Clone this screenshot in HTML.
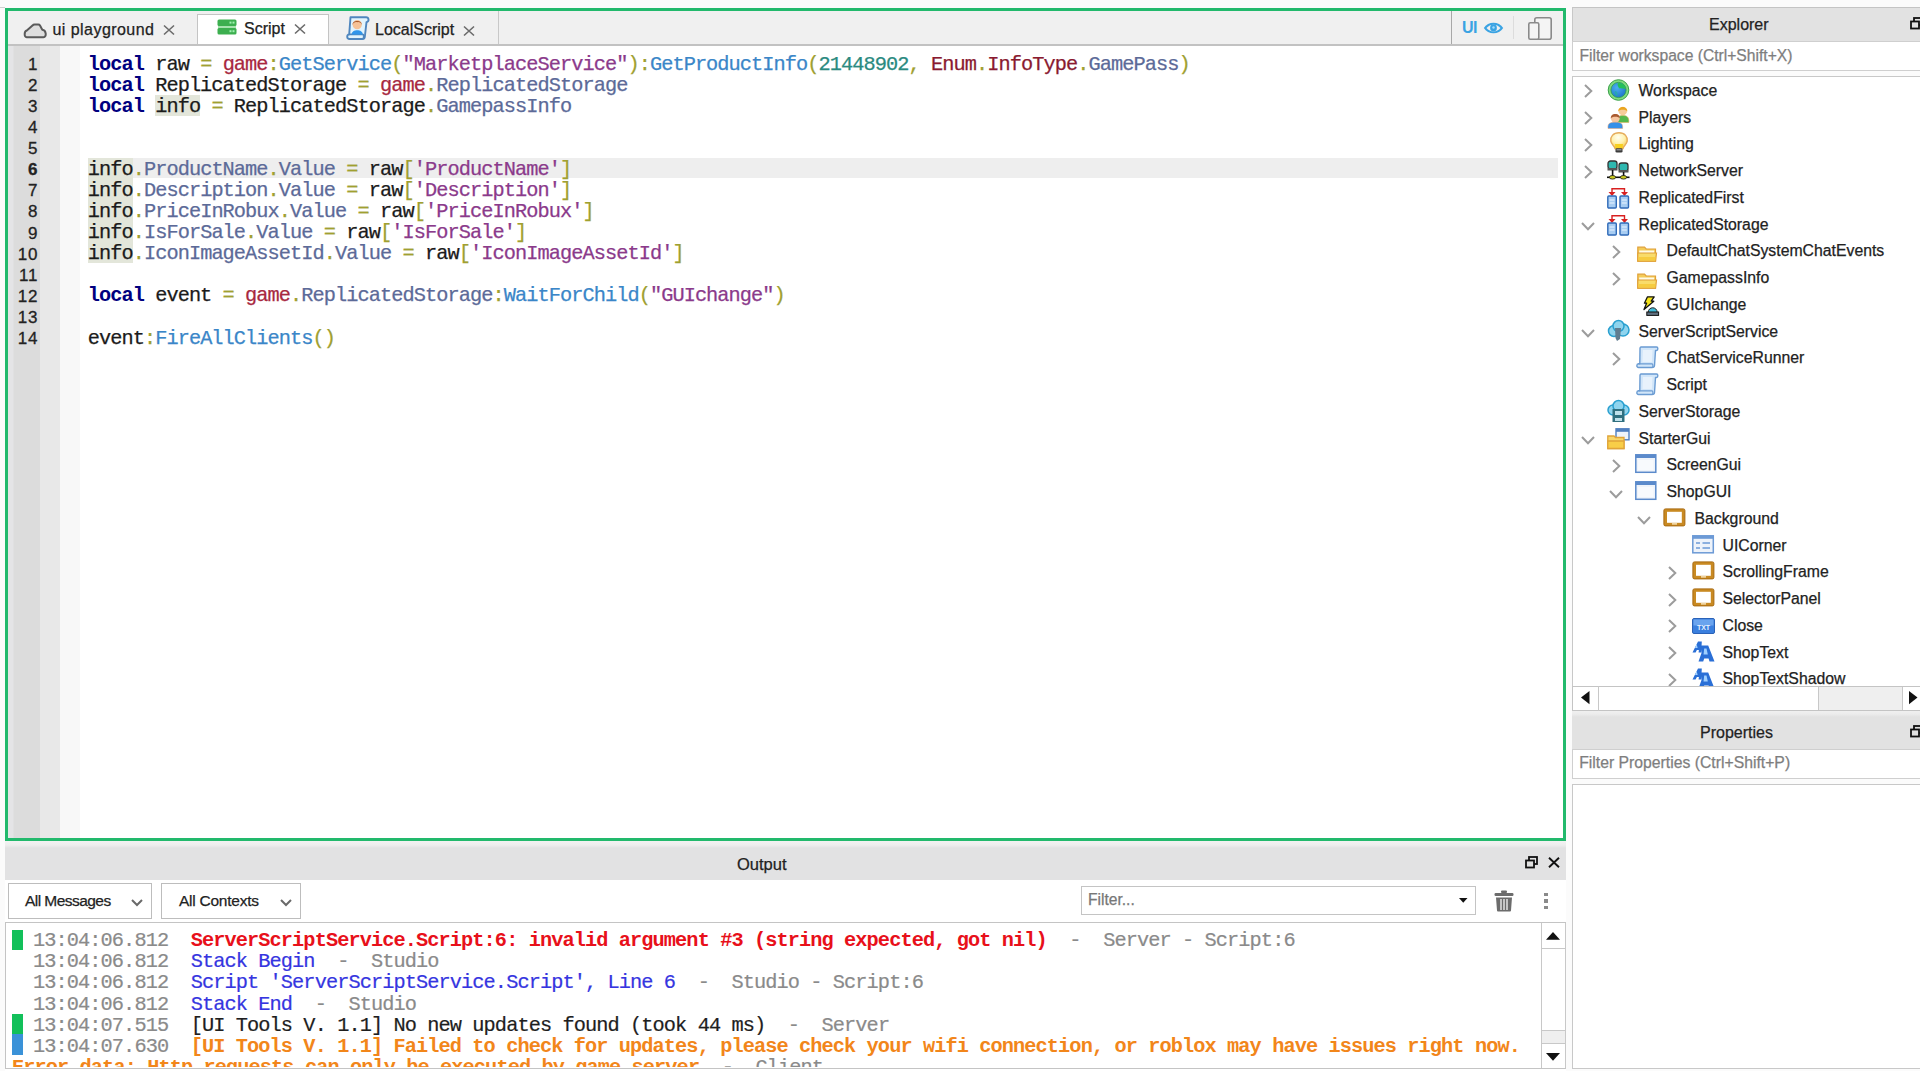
<!DOCTYPE html><html><head><meta charset="utf-8"><style>
*{box-sizing:border-box}
html,body{margin:0;padding:0;width:1920px;height:1071px;overflow:hidden;background:#fbfbfb;font-family:"Liberation Sans",sans-serif}
body{position:relative}
div,svg{position:absolute}
svg{overflow:visible}
.code{left:87.7px;font-family:"Liberation Mono",monospace;font-size:20.3px;letter-spacing:-0.928px;line-height:21px;height:21px;white-space:pre;color:#1b1b1b;-webkit-text-stroke:0.25px currentColor}
.ln{left:8px;width:30.3px;text-align:right;font-size:17px;letter-spacing:0.8px;line-height:21px;color:#222;-webkit-text-stroke:0.3px #222}
.k{color:#00007f;font-weight:bold;-webkit-text-stroke:0}
.o{color:#a0a030}
.g{color:#a8283f}
.f{color:#3a86c8}
.s{color:#8b3a8b}
.n{color:#2a8a7f}
.e{color:#8a1a30}
.p{color:#5c6a98}
.hl{background:#e3e6da}
.ti{font-size:15.8px;color:#222;white-space:nowrap;line-height:20px;-webkit-text-stroke:0.25px currentColor}
.out{left:33px;font-family:"Liberation Mono",monospace;font-size:20.3px;letter-spacing:-0.906px;line-height:21px;white-space:pre;color:#8a8a8a;-webkit-text-stroke:0.2px currentColor}
.tabt{font-size:16px;color:#222;white-space:nowrap;line-height:20px;-webkit-text-stroke:0.25px currentColor}
.x{stroke:#6b6b6b;stroke-width:1.6;fill:none}
.chev{stroke:#9c9c9c;stroke-width:2;fill:none}
</style></head><body>
<div style="left:5px;top:8px;width:1561px;height:833px;border:3px solid #22b96c;background:#fff"></div>
<div style="left:8px;top:11px;width:1555px;height:35px;background:#f0f0f0;border-bottom:2px solid #c2c2c2"></div>
<div style="left:197px;top:14px;width:132px;height:30px;background:#fff;border:1px solid #c4c4c4;border-bottom:none"></div>
<div style="left:498px;top:11px;width:1px;height:33px;background:#c8c8c8"></div>
<div style="left:1451px;top:11px;width:1px;height:33px;background:#a8a8a8"></div>
<div style="left:1513px;top:16px;width:1px;height:23px;background:#dcdcdc"></div>
<svg style="left:24px;top:23px" width="24" height="16" viewBox="0 0 24 16"><path d="M2.6 14.2 C0 14.2 0 8.2 2.8 7.6 L8.5 2.6 Q9.3 1.6 10.6 1.6 H14.3 Q15.4 1.6 16 2.6 L18.3 6.8 C22.3 7.2 23 14.2 19.5 14.2 Z" fill="#dedede" stroke="#5a5a5a" stroke-width="2" stroke-linejoin="round"/></svg>
<div class="tabt" style="left:52.5px;top:20px;letter-spacing:0.45px">ui playground</div>
<svg class="x" style="left:163px;top:25px" width="12" height="10"><path d="M1 0.5 L11 9.5 M11 0.5 L1 9.5"/></svg>
<svg style="left:217px;top:19px" width="20" height="16" viewBox="0 0 20 16">
<rect x="1" y="6" width="18" height="4" fill="#a6e3ae"/><rect x="0.5" y="0.5" width="19" height="6.5" rx="1.5" fill="#3caf4f"/>
<rect x="0.5" y="9" width="19" height="6.5" rx="1.5" fill="#3caf4f"/>
<rect x="12.5" y="2.6" width="2" height="2" fill="#9ff0b0"/><rect x="15.5" y="2.6" width="2" height="2" fill="#9ff0b0"/>
<rect x="12.5" y="11.2" width="2" height="2" fill="#9ff0b0"/><rect x="15.5" y="11.2" width="2" height="2" fill="#9ff0b0"/>
</svg>
<div class="tabt" style="left:244px;top:19px">Script</div>
<svg class="x" style="left:294px;top:24px" width="12" height="10"><path d="M1 0.5 L11 9.5 M11 0.5 L1 9.5"/></svg>
<svg style="left:346px;top:16px" width="24" height="24" viewBox="0 0 24 24">
<path d="M4.5 1.2 H20 C23 1.2 23.5 5.5 20.5 6.2 L18.8 21 C18.6 22.6 17.6 23 16.5 23 H3.5 C0.5 23 0.5 18.6 3.2 18.4 Z" fill="#e2f4fd" stroke="#4f86be" stroke-width="1.9" stroke-linejoin="round"/>
<path d="M3.2 18.4 H16.5 C18 18.4 18 21.5 17 23" fill="none" stroke="#4f86be" stroke-width="1.6"/>
<circle cx="11.2" cy="8.7" r="4.6" fill="#f6c296"/>
<path d="M6.5 9 C6 3.5 16.4 3.5 15.9 9 C15 6.2 13 5.8 11.2 6.2 C9.4 5.8 7.4 6.2 6.5 9Z" fill="#a8582c"/>
<path d="M5.8 18.4 C5.2 12.8 17.2 12.8 16.6 18.4 Z" fill="#2f95ea"/>
</svg>
<div class="tabt" style="left:375px;top:20px">LocalScript</div>
<svg class="x" style="left:463px;top:25.5px" width="12" height="10"><path d="M1 0.5 L11 9.5 M11 0.5 L1 9.5"/></svg>
<div style="left:1462px;top:17.5px;font-size:16px;font-weight:bold;color:#3aa3e3;line-height:20px;letter-spacing:-0.5px">UI</div>
<svg style="left:1483px;top:22px" width="21" height="12" viewBox="0 0 21 12">
<path d="M0.8 6 C5 -1 16 -1 20.2 6 C16 13 5 13 0.8 6 Z" fill="#3aa3e3"/>
<path d="M3.5 6 C7 1.5 14 1.5 17.5 6 C14 10.5 7 10.5 3.5 6 Z" fill="#f0f0f0"/>
<circle cx="10.5" cy="6" r="3.4" fill="#3aa3e3"/><circle cx="10.5" cy="5.5" r="1.2" fill="#9fdcff"/>
</svg>
<svg style="left:1528px;top:17px" width="24" height="23" viewBox="0 0 24 23">
<rect x="6.8" y="0.8" width="16.4" height="21.4" rx="2" fill="#f4f4f4" stroke="#8a8a8a" stroke-width="1.6"/>
<rect x="0.8" y="5.8" width="10" height="16.4" rx="1.5" fill="#f4f4f4" stroke="#8a8a8a" stroke-width="1.6"/>
</svg>
<div style="left:8px;top:46px;width:32px;height:792px;background:linear-gradient(90deg,#e4e4e6 0,#e4e4e6 5px,#dcdcdc 6px)"></div>
<div style="left:40px;top:46px;width:20px;height:792px;background:#e8e8e8"></div>
<div style="left:60px;top:46px;width:20px;height:792px;background:#f8f8f8"></div>
<div style="left:88px;top:157.50px;width:1469.5px;height:20.5px;background:#eeeeee"></div>
<div class="hl" style="left:155.2px;top:94.76px;width:45px;height:21px"></div>
<div class="hl" style="left:88px;top:158.00px;width:44.8px;height:105.40px"></div>
<div class="ln" style="top:53.90px">1</div>
<div class="ln" style="top:74.98px">2</div>
<div class="ln" style="top:96.06px">3</div>
<div class="ln" style="top:117.14px">4</div>
<div class="ln" style="top:138.22px">5</div>
<div class="ln" style="top:159.30px;font-weight:bold">6</div>
<div class="ln" style="top:180.38px">7</div>
<div class="ln" style="top:201.46px">8</div>
<div class="ln" style="top:222.54px">9</div>
<div class="ln" style="top:243.62px">10</div>
<div class="ln" style="top:264.70px">11</div>
<div class="ln" style="top:285.78px">12</div>
<div class="ln" style="top:306.86px">13</div>
<div class="ln" style="top:327.94px">14</div>
<div class="code" style="top:53.60px"><span class="k">local</span> raw <span class="o">=</span> <span class="g">game</span><span class="o">:</span><span class="f">GetService</span><span class="o">(</span><span class="s">"MarketplaceService"</span><span class="o">):</span><span class="f">GetProductInfo</span><span class="o">(</span><span class="n">21448902</span><span class="o">,</span> <span class="e">Enum</span><span class="o">.</span><span class="e">InfoType</span><span class="o">.</span><span class="p">GamePass</span><span class="o">)</span></div>
<div class="code" style="top:74.68px"><span class="k">local</span> ReplicatedStorage <span class="o">=</span> <span class="g">game</span><span class="o">.</span><span class="p">ReplicatedStorage</span></div>
<div class="code" style="top:95.76px"><span class="k">local</span> info <span class="o">=</span> ReplicatedStorage<span class="o">.</span><span class="p">GamepassInfo</span></div>
<div class="code" style="top:159.00px">info<span class="o">.</span><span class="p">ProductName</span><span class="o">.</span><span class="p">Value</span> <span class="o">=</span> raw<span class="o">[</span><span class="s">'ProductName'</span><span class="o">]</span></div>
<div class="code" style="top:180.08px">info<span class="o">.</span><span class="p">Description</span><span class="o">.</span><span class="p">Value</span> <span class="o">=</span> raw<span class="o">[</span><span class="s">'Description'</span><span class="o">]</span></div>
<div class="code" style="top:201.16px">info<span class="o">.</span><span class="p">PriceInRobux</span><span class="o">.</span><span class="p">Value</span> <span class="o">=</span> raw<span class="o">[</span><span class="s">'PriceInRobux'</span><span class="o">]</span></div>
<div class="code" style="top:222.24px">info<span class="o">.</span><span class="p">IsForSale</span><span class="o">.</span><span class="p">Value</span> <span class="o">=</span> raw<span class="o">[</span><span class="s">'IsForSale'</span><span class="o">]</span></div>
<div class="code" style="top:243.32px">info<span class="o">.</span><span class="p">IconImageAssetId</span><span class="o">.</span><span class="p">Value</span> <span class="o">=</span> raw<span class="o">[</span><span class="s">'IconImageAssetId'</span><span class="o">]</span></div>
<div class="code" style="top:285.48px"><span class="k">local</span> event <span class="o">=</span> <span class="g">game</span><span class="o">.</span><span class="p">ReplicatedStorage</span><span class="o">:</span><span class="f">WaitForChild</span><span class="o">(</span><span class="s">"GUIchange"</span><span class="o">)</span></div>
<div class="code" style="top:327.64px">event<span class="o">:</span><span class="f">FireAllClients</span><span class="o">()</span></div>
<div style="left:5px;top:841px;width:1561px;height:39px;background:linear-gradient(#f2f2f2,#eeeeee 4px,#e2e2e3 7px)"></div>
<div class="tabt" style="left:737px;top:853.5px;font-size:16.5px">Output</div>
<svg style="left:1525px;top:856px" width="13" height="13" viewBox="0 0 13 13">
<rect x="4" y="1" width="8" height="7" fill="none" stroke="#111" stroke-width="1.8"/>
<rect x="1" y="4.5" width="8" height="7" fill="#e1e1e1" stroke="#111" stroke-width="1.8"/>
</svg>
<svg style="left:1548px;top:857px" width="12" height="11"><path d="M1 0.8 L11 10.2 M11 0.8 L1 10.2" stroke="#111" stroke-width="1.9"/></svg>
<div style="left:5px;top:880px;width:1561px;height:191px;background:#fff"></div>
<div style="left:7.5px;top:883px;width:144.5px;height:36px;border:1px solid #bdbdbd;background:#fff"></div>
<div class="tabt" style="left:25px;top:891px;font-size:15.5px;letter-spacing:-0.55px">All Messages</div>
<svg class="x" style="left:130.5px;top:899px" width="12" height="8"><path d="M1 1 L6 6 L11 1" stroke="#6a6a6a" stroke-width="2"/></svg>
<div style="left:161px;top:883px;width:140px;height:36px;border:1px solid #bdbdbd;background:#fff"></div>
<div class="tabt" style="left:179px;top:891px;font-size:15.5px;letter-spacing:-0.25px">All Contexts</div>
<svg class="x" style="left:279.5px;top:899px" width="12" height="8"><path d="M1 1 L6 6 L11 1" stroke="#6a6a6a" stroke-width="2"/></svg>
<div style="left:1080.5px;top:885.5px;width:395px;height:29px;border:1px solid #c4c4c4;background:#fff"></div>
<div class="tabt" style="left:1088px;top:890px;font-size:15.6px;color:#777">Filter...</div>
<svg style="left:1458.5px;top:897.5px" width="9" height="5"><path d="M0 0 H8.5 L4.25 4.8Z" fill="#111"/></svg>
<svg style="left:1494px;top:890px" width="20" height="22" viewBox="0 0 20 22">
<rect x="7" y="0.5" width="6" height="2.5" rx="1" fill="#6c6c6c"/>
<rect x="0.5" y="3" width="19" height="3" rx="1.2" fill="#6c6c6c"/>
<path d="M2 7.5 H18 L17 20.5 Q17 21.5 16 21.5 H4 Q3 21.5 3 20.5 Z" fill="#6c6c6c"/>
<rect x="6.2" y="9" width="1.6" height="11" fill="#dcdcdc"/><rect x="9.2" y="9" width="1.6" height="11" fill="#dcdcdc"/><rect x="12.2" y="9" width="1.6" height="11" fill="#dcdcdc"/>
</svg>
<div style="left:1544px;top:892.5px;width:3.5px;height:3.5px;background:#8a8a8a"></div>
<div style="left:1544px;top:899px;width:3.5px;height:3.5px;background:#8a8a8a"></div>
<div style="left:1544px;top:905.5px;width:3.5px;height:3.5px;background:#8a8a8a"></div>
<div style="left:5px;top:922px;width:1561px;height:147px;border:1px solid #c4c4c4;border-right:none;background:#fff;overflow:hidden"></div>
<div style="left:1541px;top:923px;width:25px;height:145px;border-left:1px solid #c8c8c8;border-right:1px solid #c8c8c8;background:#fff"></div>
<div style="left:1541px;top:947.5px;width:25px;height:1px;background:#c8c8c8"></div>
<div style="left:1541px;top:1029.5px;width:25px;height:14.5px;background:#efefef;border:1px solid #c8c8c8"></div>
<svg style="left:1546px;top:931.5px" width="14" height="8"><path d="M0 7.8 H14 L7 0Z" fill="#111"/></svg>
<svg style="left:1546px;top:1052.5px" width="14" height="8"><path d="M0 0 H14 L7 7.8Z" fill="#111"/></svg>
<div style="left:11.5px;top:929.5px;width:11px;height:20px;background:#12c05a"></div>
<div style="left:11.5px;top:1013.8px;width:11px;height:20.6px;background:#12c05a"></div>
<div style="left:11.5px;top:1034.4px;width:11px;height:20.6px;background:#3a92d8"></div>
<div class="out" style="top:930.20px">13:04:06.812  <span style="color:#e8101a;font-weight:bold;-webkit-text-stroke:0">ServerScriptService.Script:6: invalid argument #3 (string expected, got nil)</span>  -  Server - Script:6</div>
<div class="out" style="top:951.30px">13:04:06.812  <span style="color:#3535e0">Stack Begin</span>  -  Studio</div>
<div class="out" style="top:972.40px">13:04:06.812  <span style="color:#3535e0">Script 'ServerScriptService.Script', Line 6</span>  -  Studio - Script:6</div>
<div class="out" style="top:993.50px">13:04:06.812  <span style="color:#3535e0">Stack End</span>  -  Studio</div>
<div class="out" style="top:1014.60px">13:04:07.515  <span style="color:#1e1e1e">[UI Tools V. 1.1] No new updates found (took 44 ms)</span>  -  Server</div>
<div class="out" style="top:1035.70px">13:04:07.630  <span style="color:#f2861a;font-weight:bold;-webkit-text-stroke:0">[UI Tools V. 1.1] Failed to check for updates, please check your wifi connection, or roblox may have issues right now.</span></div>
<div style="left:6px;top:1056px;width:1535px;height:10.5px;overflow:hidden"><div class="out" style="left:6px;top:0.80px"><span style="color:#f2861a;font-weight:bold;-webkit-text-stroke:0">Error data: Http requests can only be executed by game server</span>  -  Client</div></div>
<div style="left:1572px;top:7px;width:348px;height:35px;background:#e2e2e2;border-top:1.5px solid #c4c4c4;border-left:1px solid #c8c8c8"></div>
<div style="left:0px;top:7px;width:5px;height:1px;background:#cfcfcf"></div>
<div class="tabt" style="left:1709px;top:15px">Explorer</div>
<svg style="left:1910px;top:17px" width="13" height="13" viewBox="0 0 13 13">
<rect x="4" y="1" width="8" height="7" fill="none" stroke="#111" stroke-width="1.8"/>
<rect x="1" y="4.5" width="8" height="7" fill="#e1e1e1" stroke="#111" stroke-width="1.8"/>
</svg>
<div style="left:1572px;top:41px;width:348px;height:29.5px;background:#fff;border:1px solid #cfcfcf;border-right:none"></div>
<div class="tabt" style="left:1579.5px;top:45.5px;font-size:15.65px;color:#7e7e7e">Filter workspace (Ctrl+Shift+X)</div>
<div style="left:1572px;top:76px;width:348px;height:635px;background:#fff;border:1px solid #c8c8c8;border-right:none"></div>
<div style="left:1573px;top:77px;width:347px;height:609px;overflow:hidden">
<div class="ti" style="left:65.50px;top:3.90px">Workspace</div>
<svg class="chev" style="left:10.70px;top:7.30px" width="9" height="14"><path d="M1 1 L7.3 7 L1 13"/></svg>
<svg style="left:34.00px;top:2.00px" width="24" height="24" viewBox="0 0 24 24"><defs><radialGradient id="gg" cx="0.4" cy="0.35" r="0.7"><stop offset="0" stop-color="#4ab0f0"/><stop offset="1" stop-color="#1f74c8"/></radialGradient></defs>
<circle cx="11.5" cy="11" r="10.3" fill="#7fdc7f" stroke="#3aa04a" stroke-width="1"/>
<circle cx="11.5" cy="11" r="7.6" fill="url(#gg)" stroke="#2e9a4a" stroke-width="0.8"/>
<path d="M11 4 C15 3.5 18.5 6 18.5 9.5 C16.5 10.5 14.5 8.5 12.5 9.5 C11 8 10 5.5 11 4Z" fill="#22c05a"/>
<path d="M8 12 C10 12 11 14 10.5 17 C8.5 16.5 7 14 8 12Z" fill="#22b0a0" opacity="0.7"/></svg>
<div class="ti" style="left:65.50px;top:30.65px">Players</div>
<svg class="chev" style="left:10.70px;top:34.05px" width="9" height="14"><path d="M1 1 L7.3 7 L1 13"/></svg>
<svg style="left:34.00px;top:28.60px" width="24" height="24" viewBox="0 0 24 24"><circle cx="15.8" cy="5" r="4.3" fill="#f6cc9a"/><path d="M11.3 5.5 C10.8 -0.5 20.8 -0.5 20.3 5.5 C19.5 3.2 12 3.2 11.3 5.5Z" fill="#eaa620"/>
<path d="M10.2 16.5 C9.8 11 11.5 9.5 15.8 9.5 C20 9.5 22.2 11 21.8 16.5 Z" fill="#55b84c" stroke="#e8a850" stroke-width="0.5"/>
<circle cx="8.3" cy="12.3" r="4.4" fill="#f6c6a0"/><path d="M3.8 12.5 C3.3 6.6 13.3 6.6 12.8 12.5 C12 10.3 4.6 10.3 3.8 12.5Z" fill="#a85a30"/>
<path d="M1 22.5 C0.5 17.5 2.5 16.2 8.3 16.2 C14 16.2 16 17.5 15.6 22.5 Z" fill="#3590e8" stroke="#e8a070" stroke-width="0.5"/></svg>
<div class="ti" style="left:65.50px;top:57.40px">Lighting</div>
<svg class="chev" style="left:10.70px;top:60.80px" width="9" height="14"><path d="M1 1 L7.3 7 L1 13"/></svg>
<svg style="left:35.50px;top:55.30px" width="24" height="24" viewBox="0 0 24 24"><defs><radialGradient id="bg" cx="0.45" cy="0.3" r="0.7"><stop offset="0" stop-color="#fffef0"/><stop offset="0.55" stop-color="#fff2b0"/><stop offset="1" stop-color="#f5c848"/></radialGradient></defs>
<path d="M10 0.8 C4.2 0.8 1 4.8 1.8 9.2 C2.4 12.5 5.2 13.8 6 16.5 H14 C14.8 13.8 17.6 12.5 18.2 9.2 C19 4.8 15.8 0.8 10 0.8Z" fill="url(#bg)" stroke="#e6ac5c" stroke-width="1.4"/>
<path d="M6 12 H14 L13.6 16.5 H6.4Z" fill="#f8d020"/>
<rect x="6.5" y="16.3" width="7" height="4.2" rx="1.3" fill="#3c3c3c"/><rect x="7.5" y="17.2" width="5" height="1.2" fill="#a0a0a0"/></svg>
<div class="ti" style="left:65.50px;top:84.15px">NetworkServer</div>
<svg class="chev" style="left:10.70px;top:87.55px" width="9" height="14"><path d="M1 1 L7.3 7 L1 13"/></svg>
<svg style="left:34.00px;top:83.00px" width="24" height="24" viewBox="0 0 24 24"><rect x="1" y="1" width="9" height="8" rx="2.5" fill="#2fb8b0" stroke="#333" stroke-width="1.3"/>
<rect x="12" y="3" width="9" height="8" rx="2.5" fill="#2fb8b0" stroke="#333" stroke-width="1.3"/>
<rect x="0.5" y="8" width="10" height="2.5" fill="#555"/><rect x="11.5" y="10" width="10" height="2.5" fill="#555"/>
<rect x="4.8" y="10" width="1.6" height="7" fill="#111"/><rect x="15.8" y="12" width="1.6" height="5" fill="#111"/>
<rect x="0" y="16.5" width="22.5" height="1.6" fill="#111"/>
<ellipse cx="5.5" cy="17.3" rx="3.2" ry="1.8" fill="#c8c820" stroke="#111" stroke-width="0.8"/>
<ellipse cx="16.5" cy="17.3" rx="3.2" ry="1.8" fill="#c8c820" stroke="#111" stroke-width="0.8"/></svg>
<div class="ti" style="left:65.50px;top:110.90px">ReplicatedFirst</div>
<svg style="left:34.00px;top:110.00px" width="24" height="24" viewBox="0 0 24 24"><path d="M5 6 V1.8 H17.5 V6" fill="none" stroke="#d82020" stroke-width="1.4"/>
<path d="M1.5 5 H8.5 L5 9Z M14 5 H21 L17.5 9Z" fill="#d82020"/>
<rect x="0.8" y="9" width="8.5" height="12" rx="1" fill="#a8cdf2" stroke="#2f6ab8" stroke-width="1.4"/>
<rect x="13" y="9" width="8.5" height="12" rx="1" fill="#a8cdf2" stroke="#2f6ab8" stroke-width="1.4"/>
<path d="M2.5 13 H7.5 M2.5 16 H7.5 M14.8 13 H19.8 M14.8 16 H19.8" stroke="#eaf4ff" stroke-width="1"/></svg>
<div class="ti" style="left:65.50px;top:137.65px">ReplicatedStorage</div>
<svg class="chev" style="left:8.20px;top:145.05px" width="14" height="9"><path d="M1 1 L7 7.3 L13 1"/></svg>
<svg style="left:34.00px;top:136.70px" width="24" height="24" viewBox="0 0 24 24"><path d="M5 6 V1.8 H17.5 V6" fill="none" stroke="#d82020" stroke-width="1.4"/>
<path d="M1.5 5 H8.5 L5 9Z M14 5 H21 L17.5 9Z" fill="#d82020"/>
<rect x="0.8" y="9" width="8.5" height="12" rx="1" fill="#a8cdf2" stroke="#2f6ab8" stroke-width="1.4"/>
<rect x="13" y="9" width="8.5" height="12" rx="1" fill="#a8cdf2" stroke="#2f6ab8" stroke-width="1.4"/>
<path d="M2.5 13 H7.5 M2.5 16 H7.5 M14.8 13 H19.8 M14.8 16 H19.8" stroke="#eaf4ff" stroke-width="1"/></svg>
<div class="ti" style="left:93.50px;top:164.40px">DefaultChatSystemChatEvents</div>
<svg class="chev" style="left:38.70px;top:167.80px" width="9" height="14"><path d="M1 1 L7.3 7 L1 13"/></svg>
<svg style="left:63.50px;top:169.30px" width="24" height="24" viewBox="0 0 24 24"><path d="M0.8 1.2 H7.5 L9.2 3 H18.5 V15.2 H0.8 Z" fill="#f4cc58" stroke="#e0a038" stroke-width="1.2"/>
<path d="M2.2 4.5 H17.2 V8 H2.2Z" fill="#fffbe8"/>
<path d="M0.8 7 H19.5 L18.5 15.2 H0.8Z" fill="#f9dc6a" stroke="#e0a038" stroke-width="1.2"/>
<path d="M1.5 11 H18.5 V14.5 H1.5Z" fill="#f6cc40"/></svg>
<div class="ti" style="left:93.50px;top:191.15px">GamepassInfo</div>
<svg class="chev" style="left:38.70px;top:194.55px" width="9" height="14"><path d="M1 1 L7.3 7 L1 13"/></svg>
<svg style="left:63.50px;top:196.00px" width="24" height="24" viewBox="0 0 24 24"><path d="M0.8 1.2 H7.5 L9.2 3 H18.5 V15.2 H0.8 Z" fill="#f4cc58" stroke="#e0a038" stroke-width="1.2"/>
<path d="M2.2 4.5 H17.2 V8 H2.2Z" fill="#fffbe8"/>
<path d="M0.8 7 H19.5 L18.5 15.2 H0.8Z" fill="#f9dc6a" stroke="#e0a038" stroke-width="1.2"/>
<path d="M1.5 11 H18.5 V14.5 H1.5Z" fill="#f6cc40"/></svg>
<div class="ti" style="left:93.50px;top:217.90px">GUIchange</div>
<svg style="left:69.00px;top:218.60px" width="24" height="24" viewBox="0 0 24 24"><path d="M5.5 0.8 H12.2 L9.2 5.2 H11.8 L2 13.5 L4.6 7.2 H2.4 Z" fill="#f5e41a" stroke="#111" stroke-width="1.3" stroke-linejoin="round"/>
<path d="M6.2 16.5 C6.2 10.2 15.2 10.2 15.2 16.5Z" fill="#3fbad8" stroke="#222" stroke-width="1"/>
<rect x="4.8" y="16" width="11.8" height="3.4" fill="#5f6f7f" stroke="#111" stroke-width="1"/></svg>
<div class="ti" style="left:65.50px;top:244.65px">ServerScriptService</div>
<svg class="chev" style="left:8.20px;top:252.05px" width="14" height="9"><path d="M1 1 L7 7.3 L13 1"/></svg>
<svg style="left:34.00px;top:242.30px" width="24" height="24" viewBox="0 0 24 24"><circle cx="7" cy="12" r="5.5" fill="#8fd4ee" stroke="#2aa0d0" stroke-width="1.5"/>
<circle cx="16" cy="11" r="6" fill="#8fd4ee" stroke="#2aa0d0" stroke-width="1.5"/>
<circle cx="11.5" cy="7" r="5.5" fill="#8fd4ee" stroke="#2aa0d0" stroke-width="1.5"/>
<path d="M8 9 H14 L13 20 L10 22 L8.5 19Z" fill="#607c90"/></svg>
<div class="ti" style="left:93.50px;top:271.40px">ChatServiceRunner</div>
<svg class="chev" style="left:38.70px;top:274.80px" width="9" height="14"><path d="M1 1 L7.3 7 L1 13"/></svg>
<svg style="left:63.00px;top:269.00px" width="24" height="24" viewBox="0 0 24 24"><path d="M5 1 H20.5 C22.3 1 22.3 4.5 20.5 4.5 L19.5 4.5 L18.5 19.5 C18.4 21 17.5 21.5 16 21.5 H2.5 C0.3 21.5 0.3 17.8 2.5 17.8 H3.8 L4 2.5 C4 1.5 4.5 1 5 1 Z" fill="#d2e6f9" stroke="#6a9bd2" stroke-width="1.4" stroke-linejoin="round"/>
<path d="M2.5 17.8 H16 C17.2 17.8 17.2 21.5 16 21.5" fill="none" stroke="#6a9bd2" stroke-width="1.2"/>
<path d="M7 4 H16.5 L15.8 16 H6.5 Z" fill="#e8f2fc"/></svg>
<div class="ti" style="left:93.50px;top:298.15px">Script</div>
<svg style="left:63.00px;top:296.00px" width="24" height="24" viewBox="0 0 24 24"><path d="M5 1 H20.5 C22.3 1 22.3 4.5 20.5 4.5 L19.5 4.5 L18.5 19.5 C18.4 21 17.5 21.5 16 21.5 H2.5 C0.3 21.5 0.3 17.8 2.5 17.8 H3.8 L4 2.5 C4 1.5 4.5 1 5 1 Z" fill="#d2e6f9" stroke="#6a9bd2" stroke-width="1.4" stroke-linejoin="round"/>
<path d="M2.5 17.8 H16 C17.2 17.8 17.2 21.5 16 21.5" fill="none" stroke="#6a9bd2" stroke-width="1.2"/>
<path d="M7 4 H16.5 L15.8 16 H6.5 Z" fill="#e8f2fc"/></svg>
<div class="ti" style="left:65.50px;top:324.90px">ServerStorage</div>
<svg style="left:34.00px;top:323.00px" width="24" height="24" viewBox="0 0 24 24"><circle cx="6" cy="10" r="5" fill="#8fd4ee" stroke="#2aa0d0" stroke-width="1.5"/>
<circle cx="17" cy="10" r="5" fill="#8fd4ee" stroke="#2aa0d0" stroke-width="1.5"/>
<circle cx="11.5" cy="6" r="5.5" fill="#8fd4ee" stroke="#2aa0d0" stroke-width="1.5"/>
<rect x="5.5" y="9" width="12" height="13" fill="#2f6f7f"/>
<rect x="8" y="11" width="7" height="4" fill="#bfe0ea"/><rect x="8" y="18" width="7" height="3" fill="#bfe0ea"/></svg>
<div class="ti" style="left:65.50px;top:351.65px">StarterGui</div>
<svg class="chev" style="left:8.20px;top:359.05px" width="14" height="9"><path d="M1 1 L7 7.3 L13 1"/></svg>
<svg style="left:34.00px;top:351.20px" width="24" height="24" viewBox="0 0 24 24"><rect x="9" y="0.8" width="13" height="11" fill="#eef4fb" stroke="#4f7fc0" stroke-width="1.4"/>
<rect x="9" y="0.8" width="13" height="3" fill="#4f7fc0"/>
<path d="M0.8 8 H7 L8.5 9.5 H17 V20.5 H0.8Z" fill="#f7d76a" stroke="#e0a43a" stroke-width="1.3"/>
<path d="M0.8 13 H17 V20.5 H0.8Z" fill="#f8ce48" stroke="#e0a43a" stroke-width="1.3"/></svg>
<div class="ti" style="left:93.50px;top:378.40px">ScreenGui</div>
<svg class="chev" style="left:38.70px;top:381.80px" width="9" height="14"><path d="M1 1 L7.3 7 L1 13"/></svg>
<svg style="left:62.00px;top:377.30px" width="24" height="24" viewBox="0 0 24 24"><rect x="0.8" y="0.8" width="20" height="17.5" fill="#eef3fa" stroke="#5b8acb" stroke-width="1.5"/>
<rect x="0.8" y="0.8" width="20" height="3.2" fill="#5b8acb"/>
<rect x="3" y="6" width="15.5" height="10" fill="#f8fafd"/></svg>
<div class="ti" style="left:93.50px;top:405.15px">ShopGUI</div>
<svg class="chev" style="left:36.20px;top:412.55px" width="14" height="9"><path d="M1 1 L7 7.3 L13 1"/></svg>
<svg style="left:62.00px;top:404.30px" width="24" height="24" viewBox="0 0 24 24"><rect x="0.8" y="0.8" width="20" height="17.5" fill="#eef3fa" stroke="#5b8acb" stroke-width="1.5"/>
<rect x="0.8" y="0.8" width="20" height="3.2" fill="#5b8acb"/>
<rect x="3" y="6" width="15.5" height="10" fill="#f8fafd"/></svg>
<div class="ti" style="left:121.50px;top:431.90px">Background</div>
<svg class="chev" style="left:64.20px;top:439.30px" width="14" height="9"><path d="M1 1 L7 7.3 L13 1"/></svg>
<svg style="left:90.30px;top:431.00px" width="24" height="24" viewBox="0 0 24 24"><rect x="0.9" y="0.9" width="21" height="17" rx="1.5" fill="#c98a22" stroke="#a86a10" stroke-width="1"/>
<rect x="4" y="3.8" width="14.8" height="11" fill="#fff"/>
<rect x="9" y="15.3" width="5" height="1.2" fill="#fff4d8"/></svg>
<div class="ti" style="left:149.50px;top:458.65px">UICorner</div>
<svg style="left:118.70px;top:457.60px" width="24" height="24" viewBox="0 0 24 24"><rect x="0.8" y="0.8" width="20.5" height="17" fill="#eef3fa" stroke="#6c9ad6" stroke-width="1.5"/>
<rect x="0.8" y="0.8" width="20.5" height="3" fill="#6c9ad6"/>
<path d="M4 8 H8 M4 13 H8 M10.5 8 H18 M10.5 13 H18" stroke="#6c9ad6" stroke-width="1.6"/></svg>
<div class="ti" style="left:149.50px;top:485.40px">ScrollingFrame</div>
<svg class="chev" style="left:94.70px;top:488.80px" width="9" height="14"><path d="M1 1 L7.3 7 L1 13"/></svg>
<svg style="left:118.70px;top:484.20px" width="24" height="24" viewBox="0 0 24 24"><rect x="0.9" y="0.9" width="21" height="17" rx="1.5" fill="#c98a22" stroke="#a86a10" stroke-width="1"/>
<rect x="4" y="3.8" width="14.8" height="11" fill="#fff"/>
<rect x="9" y="15.3" width="5" height="1.2" fill="#fff4d8"/></svg>
<div class="ti" style="left:149.50px;top:512.15px">SelectorPanel</div>
<svg class="chev" style="left:94.70px;top:515.55px" width="9" height="14"><path d="M1 1 L7.3 7 L1 13"/></svg>
<svg style="left:118.70px;top:511.00px" width="24" height="24" viewBox="0 0 24 24"><rect x="0.9" y="0.9" width="21" height="17" rx="1.5" fill="#c98a22" stroke="#a86a10" stroke-width="1"/>
<rect x="4" y="3.8" width="14.8" height="11" fill="#fff"/>
<rect x="9" y="15.3" width="5" height="1.2" fill="#fff4d8"/></svg>
<div class="ti" style="left:149.50px;top:538.90px">Close</div>
<svg class="chev" style="left:94.70px;top:542.30px" width="9" height="14"><path d="M1 1 L7.3 7 L1 13"/></svg>
<svg style="left:118.70px;top:541.00px" width="24" height="24" viewBox="0 0 24 24"><rect x="0.5" y="0.5" width="22" height="15" rx="1.5" fill="#3a7fde" stroke="#2a62b8" stroke-width="1"/>
<rect x="1.5" y="1.5" width="20" height="6" fill="#6aa4ee"/>
<text x="11.5" y="11.5" font-family="Liberation Sans" font-size="7" font-weight="bold" fill="#e8f2ff" text-anchor="middle">TXT</text></svg>
<div class="ti" style="left:149.50px;top:565.65px">ShopText</div>
<svg class="chev" style="left:94.70px;top:569.05px" width="9" height="14"><path d="M1 1 L7.3 7 L1 13"/></svg>
<svg style="left:118.70px;top:564.00px" width="24" height="24" viewBox="0 0 24 24"><path d="M0.5 11.5 L6 0.5 H9.8 L9.2 11.5 H6.6 L6.9 9 H4.9 L3.6 11.5Z" fill="#2a6fd6"/>
<path d="M8.5 4.5 H16.2 L22.5 20.5 H17.5 L16.6 17.5 H12.2 L11.2 20.5 H6.5 L9.5 12 Z" fill="#2a6fd6"/>
<path d="M12.2 7.5 H14.5 L15.8 13.5 H11.5 Z" fill="#9fd0ff"/>
<path d="M4.6 3 L3 7 H5.6Z" fill="#9fd0ff"/></svg>
<div class="ti" style="left:149.50px;top:592.40px">ShopTextShadow</div>
<svg class="chev" style="left:94.70px;top:595.80px" width="9" height="14"><path d="M1 1 L7.3 7 L1 13"/></svg>
<svg style="left:118.70px;top:590.70px" width="24" height="24" viewBox="0 0 24 24"><path d="M0.5 11.5 L6 0.5 H9.8 L9.2 11.5 H6.6 L6.9 9 H4.9 L3.6 11.5Z" fill="#2a6fd6"/>
<path d="M8.5 4.5 H16.2 L22.5 20.5 H17.5 L16.6 17.5 H12.2 L11.2 20.5 H6.5 L9.5 12 Z" fill="#2a6fd6"/>
<path d="M12.2 7.5 H14.5 L15.8 13.5 H11.5 Z" fill="#9fd0ff"/>
<path d="M4.6 3 L3 7 H5.6Z" fill="#9fd0ff"/></svg>
</div>
<div style="left:1572px;top:686px;width:348px;height:24.5px;background:#fff;border:1px solid #c4c4c4;border-right:none"></div>
<div style="left:1597.5px;top:686px;width:1px;height:24.5px;background:#c8c8c8"></div>
<div style="left:1817.5px;top:687px;width:85px;height:22.5px;background:#efefef;border-left:1px solid #c8c8c8;border-right:1px solid #c8c8c8"></div>
<svg style="left:1581.3px;top:690.7px" width="9" height="13.5"><path d="M8.5 0 V13.2 L0 6.6Z" fill="#111"/></svg>
<svg style="left:1909.3px;top:690.7px" width="9" height="13.5"><path d="M0 0 V13.2 L8.5 6.6Z" fill="#111"/></svg>
<div style="left:1572px;top:710.5px;width:348px;height:38.5px;background:linear-gradient(#f0f0f0,#ececec 3px,#e2e2e2 6px)"></div>
<div class="tabt" style="left:1700px;top:723px">Properties</div>
<svg style="left:1910px;top:725px" width="13" height="13" viewBox="0 0 13 13">
<rect x="4" y="1" width="8" height="7" fill="none" stroke="#111" stroke-width="1.8"/>
<rect x="1" y="4.5" width="8" height="7" fill="#e1e1e1" stroke="#111" stroke-width="1.8"/>
</svg>
<div style="left:1572px;top:748.5px;width:348px;height:30px;background:#fff;border:1px solid #cfcfcf;border-right:none"></div>
<div class="tabt" style="left:1579.2px;top:752.5px;font-size:15.75px;color:#7e7e7e">Filter Properties (Ctrl+Shift+P)</div>
<div style="left:1572px;top:784px;width:348px;height:284.5px;background:#fff;border:1px solid #c8c8c8;border-right:none"></div>
</body></html>
